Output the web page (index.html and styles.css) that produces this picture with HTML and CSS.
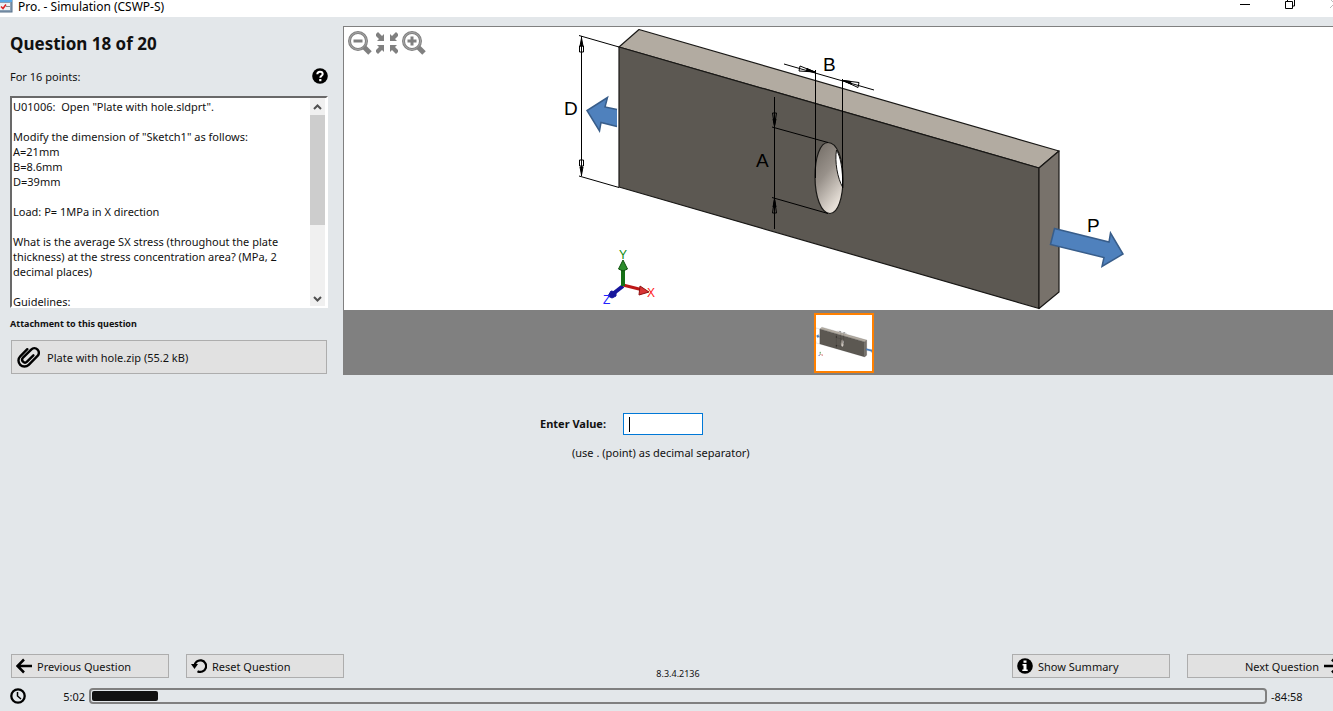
FILE: index.html
```html
<!DOCTYPE html>
<html lang="en">

<head>
    <meta charset="UTF-8">
    <meta name="viewport" content="width=device-width, initial-scale=1.0">
    <title>Pro. - Simulation (CSWP-S)</title>
    <link rel="stylesheet" href="styles.css">
</head>

<body>
    <div class="app">
        <header class="titlebar">
            <svg class="appicon" width="13" height="13" viewBox="0 0 13 13">
                <rect x="-4" y="0" width="16" height="12" fill="#8aa0b5" stroke="#56708a"/>
                <rect x="-4" y="0" width="16" height="2" fill="#5aa9e6"/>
                <rect x="-3" y="3" width="13" height="7" fill="#eef2f5"/>
                <path d="M1 6.5l2 2 3-4" fill="none" stroke="#d22" stroke-width="1.5"/>
                <path d="M6 6.5h4" stroke="#888"/>
            </svg>
            <span class="apptitle">Pro. - Simulation (CSWP-S)</span>
            <button class="winbtn" aria-label="Minimize"><svg width="11" height="17" viewBox="0 0 11 17"><path d="M0 4.5h10" stroke="#000"/></svg></button>
            <button class="winbtn" aria-label="Restore"><svg width="11" height="17" viewBox="0 0 11 17"><path d="M1.500 1.500h7v7h-7zM3.500 1v-2h7v7h-2" fill="none" stroke="#000"/></svg></button>
            <button class="winbtn" aria-label="Close"><svg width="11" height="17" viewBox="0 0 11 17"><path d="M2-1l9 9M11-1L2 8" stroke="#bbb"/></svg></button>
        </header>

        <main class="content">
            <section class="question">
                <h1>Question 18 of 20</h1>
                <div class="points">
                    <span>For 16 points:</span>
                    <button class="help" aria-label="Help">
                        <svg width="16" height="16" viewBox="0 0 16 16">
                            <circle cx="8" cy="8" r="7.8"/>
                            <path d="M5.300 6.200C5.300 2.700 10.700 2.900 10.700 6c0 1.700-2.400 1.700-2.400 3.700" fill="none" stroke="#fff" stroke-width="2"/>
                            <rect x="7.200" y="11" width="2.200" height="2.200" fill="#fff"/>
                        </svg>
                    </button>
                </div>
                <div class="textbox">
                    <textarea class="textarea" aria-label="Question text" readonly>U01006:  Open "Plate with hole.sldprt".

Modify the dimension of "Sketch1" as follows:
A=21mm
B=8.6mm
D=39mm

Load: P= 1MPa in X direction

What is the average SX stress (throughout the plate thickness) at the stress concentration area? (MPa, 2 decimal places)

Guidelines:</textarea>
                    <div class="scrollbar">
                        <svg width="15" height="17" viewBox="0 0 15 17"><path d="M4 11l3.500-3.500L11 11" fill="none" stroke="#505050" stroke-width="2"/></svg>
                        <div class="thumb"></div>
                        <svg width="15" height="17" viewBox="0 0 15 17"><path d="M4 8l3.500 3.500L11 8" fill="none" stroke="#505050" stroke-width="2"/></svg>
                    </div>
                </div>
                <h2>Attachment to this question</h2>
                <button class="btn attachment">
                    <svg width="24" height="24" viewBox="1 1 24 24" fill="none" stroke="#000" stroke-width="2.400" stroke-linecap="round">
                        <path transform="rotate(45 13 13)" d="M7 8v10a6 6 0 0 0 12 0V5.500a4.500 4.500 0 0 0-9 0V17a2.800 2.800 0 0 0 5.600 0V8"/>
                    </svg>
                    Plate with hole.zip (55.2 kB)
                </button>
            </section>

            <section class="viewer">
                <div class="stage">
                    <div class="tools">
                        <button aria-label="Zoom out">
                            <svg width="26" height="26" viewBox="0 0 26 26" fill="none" stroke="#808080">
                                <circle cx="11" cy="11" r="8.500" stroke-width="3"/>
                                <circle cx="11" cy="11" r="8.500" stroke="#a8a8a8"/>
                                <path d="M17 17l6 6" stroke-width="5"/>
                                <path d="M6.500 11h9" stroke-width="3"/>
                            </svg>
                        </button>
                        <button aria-label="Fit to window">
                            <svg width="26" height="26" viewBox="0 0 26 26" fill="#808080">
                                <path id="corner" d="M2 4l2-2 4 4 2-2v7H3l2-2-3-3z"/>
                                <use href="#corner" transform="matrix(-1 0 0 1 26 0)"/>
                                <use href="#corner" transform="matrix(1 0 0 -1 0 26)"/>
                                <use href="#corner" transform="rotate(180 13 13)"/>
                            </svg>
                        </button>
                        <button aria-label="Zoom in">
                            <svg width="26" height="26" viewBox="0 0 26 26" fill="none" stroke="#808080">
                                <circle cx="11" cy="11" r="8.500" stroke-width="3"/>
                                <circle cx="11" cy="11" r="8.500" stroke="#a8a8a8"/>
                                <path d="M17 17l6 6" stroke-width="5"/>
                                <path d="M6.500 11h9M11 6.500v9" stroke-width="3"/>
                            </svg>
                        </button>
                    </div>
                    <svg class="drawing" viewBox="344 27 1000 283">
                        <defs>
                            <linearGradient id="bore" x1="0" y1="0" x2=".5" y2="1">
                                <stop offset="0" stop-color="#6f6962"/>
                                <stop offset=".5" stop-color="#98918a"/>
                                <stop offset="1" stop-color="#e6dfd7"/>
                            </linearGradient>
                        </defs>
                        <g id="plate">
                            <!-- plate -->
                            <g stroke="#191816" stroke-width="1.200" stroke-linejoin="round">
                                <path d="M619 47l20-17.500L1059 151l-20 17z" fill="#b2aba1"/>
                                <path d="M619 47l420 121v140.500L619 187z" fill="#5c5852"/>
                                <path d="M1039 168l20-17v141l-20 16.500z" fill="#78726b"/>
                                <path d="M828 142.500c9 0 15 16 15 36 0 19-5 35-13 35-9 0-15-17-15-37 0-19 5-34 13-34z" fill="url(#bore)"/>
                            </g>
                            <path d="M836.500 150c4 7 6.300 18 6.300 37.500-5.300-9-8.300-26-6.300-37.500z" fill="#fff" stroke="#191816"/>
                            <!-- load arrows -->
                            <g fill="#4f81bd" stroke="#385d8a" stroke-width="1.500">
                                <path d="M617 109.500l-12-2.500 2.500-9.500L587 110.500l12.500 20.500 1.500-8.500 16 4"/>
                                <path d="M1054.500 228.500l54.500 13.500 1.500-9 12.500 21-21 12.500 2-9-53.500-13z"/>
                            </g>
                            <!-- dimensions -->
                            <g fill="none" stroke="#000">
                                <path d="M581.500 36v140"/>
                                <path d="M579 35.500l40 11.500M579 176l40 11.500"/>
                                <path d="M579.500 46v6h4v-6zM579.500 160v6h4v-6z"/>
                                <path d="M581.500 38l-1.500 8h3zM581.500 175l-1.500-8h3z" fill="#000"/>
                                <path d="M774.500 97v132M772 127l56 15.500M772 197.500l56 16"/>
                                <path d="M774.500 126l-2-13h4zM774.500 199l-2 14h4z"/>
                                <path d="M774.500 126l-1.500-7h3zM774.500 199l-1.500 8h3z" fill="#000"/>
                                <path d="M815.500 70v108M842.500 79v109M784 64l90 26"/>
                                <path d="M815 72l-15-6-1 5zM843 80.500l16 2-1 5z"/>
                                <path d="M815 72l-8-3.500-.5 2.500zM843 80.500l8 1-.5 2.500z" fill="#000"/>
                            </g>
                            <!-- triad -->
                            <path d="M623 286l-9 7" stroke="#16169c" stroke-width="4"/>
                            <path d="M608 296l3-5 5 1v4l-4 2z" fill="#16169c" stroke="#16169c"/>
                            <path d="M623 285l20 5" stroke="#bd1717" stroke-width="3"/>
                            <path d="M640 286l9 6-10 3z" fill="#d83434" stroke="#8e1010"/>
                            <path d="M623 286v-18" stroke="#167016" stroke-width="4"/>
                            <path d="M623 260l-4.500 9 4.500 2 4.500-2z" fill="#2d8e2d" stroke="#0d500d"/>
                        </g>
                        <g class="dims">
                            <text x="564" y="115">D</text>
                            <text x="823" y="71">B</text>
                            <text x="756" y="167">A</text>
                            <text x="1087" y="232">P</text>
                        </g>
                        <g class="axes">
                            <text x="619" y="259" fill="#0d8a0d">Y</text>
                            <text x="647" y="297" fill="#f22">X</text>
                            <text x="603" y="304" fill="#22f">Z</text>
                        </g>
                    </svg>
                </div>
                <div class="strip">
                    <button class="preview" aria-label="Image 1">
                        <svg width="56" height="56" viewBox="584 -84 524 524"><use href="#plate"/></svg>
                    </button>
                </div>
            </section>
        </main>

        <form class="answer" onsubmit="return false">
            <div class="answerrow">
                <label for="value">Enter Value:</label>
                <input type="text" id="value">
            </div>
            <p>(use . (point) as decimal separator)</p>
        </form>

        <footer>
            <nav class="buttons">
                <button class="btn">
                    <svg width="16" height="16" viewBox="0 0 16 16"><path d="M16 8H2M8 1.500L1.500 8 8 14.500" fill="none" stroke="#000" stroke-width="2.500"/></svg>
                    Previous Question
                </button>
                <button class="btn">
                    <svg width="16" height="16" viewBox="0 0 16 16"><path d="M3.500 8a5.800 5.800 0 1 1 3 5.200" fill="none" stroke="#000" stroke-width="2.200"/><path d="M0 6h7l-3.500 5z"/></svg>
                    Reset Question
                </button>
                <span class="version">8.3.4.2136</span>
                <button class="btn">
                    <svg width="16" height="16" viewBox="0 0 16 16"><circle cx="8" cy="8" r="7.8"/><path d="M6.500 2.500h3v2.200h-3zM5.500 6h4v5.500h1.200V13H5.300v-1.500h1.200v-4h-1z" fill="#fff"/></svg>
                    Show Summary
                </button>
                <button class="btn next">
                    Next Question
                    <svg width="16" height="16" viewBox="0 0 16 16"><path d="M0 8h14M8 1.500L14.500 8 8 14.500" fill="none" stroke="#000" stroke-width="2.500"/></svg>
                </button>
            </nav>
            <div class="timer">
                <svg width="16" height="16" viewBox="0 0 16 16" fill="none" stroke="#000"><circle cx="8" cy="8" r="6.700" stroke-width="2.300"/><path d="M7.500 4v4l3.500 3" stroke-width="1.500"/></svg>
                <label class="elapsed" for="time">5:02</label>
                <progress id="time" value="302" max="5400"></progress>
                <span class="remaining">-84:58</span>
            </div>
        </footer>
    </div>
</body>

</html>
```
FILE: styles.css
```css
* {
    box-sizing: border-box;
}

body {
    margin: 0;
    overflow: hidden;
    background-color: #e3e7ea;
    color: #111;
    font-family: "Noto Sans", "Open Sans", sans-serif;
    font-size: 11px;
    line-height: 15px;
}

button,
input,
textarea {
    font: inherit;
    color: inherit;
}

h1,
h2,
p {
    margin: 0;
}

svg {
    display: block;
    flex: none;
}

/* the window is slightly wider than the screen */
.app {
    width: calc(100% + 22px);
    min-height: 100vh;
    display: flex;
    flex-direction: column;
}

.titlebar {
    display: flex;
    height: 17px;
    background-color: #fff;
}

.appicon {
    margin-right: 5px;
}

.apptitle {
    flex: 1;
    font-size: 12px;
    line-height: 14px;
    color: #000;
}

.winbtn {
    width: 44px;
    padding: 0;
    border: none;
    background: none;
    display: flex;
    justify-content: center;
}

.content {
    display: flex;
    gap: 15px;
    padding: 9px 11px 0 10px;
}

.question {
    width: 318px;
    flex: none;
}

h1 {
    padding-top: 6px;
    font-size: 17px;
    line-height: 24px;
}

.points {
    display: flex;
    justify-content: space-between;
    align-items: center;
    height: 40px;
}

.help {
    padding: 0;
    border: none;
    background: none;
}

.textbox {
    display: flex;
    height: 212px;
    border: 2px solid #696969;
    border-color: #696969 #fff #fff #696969;
    background-color: #fff;
}

.textarea {
    flex: 1;
    min-width: 0;
    padding: 1px 0 0 1px;
    border: none;
    outline: none;
    resize: none;
    overflow: hidden;
    background: none;
}

.scrollbar {
    width: 15px;
    margin-right: 1px;
    display: flex;
    flex-direction: column;
    background-color: #f0f0f0;
}

.thumb {
    height: 110px;
    margin-bottom: auto;
    background-color: #cdcdcd;
}

h2 {
    padding: 8px 0 9px;
    font-size: 9px;
    line-height: 15px;
}

.btn {
    width: 158px;
    height: 24px;
    padding: 0 4px;
    border: 1px solid #adadad;
    background-color: #e1e1e1;
    display: flex;
    align-items: center;
    gap: 5px;
    white-space: nowrap;
}

.attachment {
    width: calc(100% - 2px);
    height: 34px;
    margin: 0 1px;
    gap: 7px;
}

.viewer {
    flex: 1;
    min-width: 0;
}

.stage {
    position: relative;
    border: 1px solid #808080;
    border-width: 1px 0 0 1px;
    background-color: #fff;
}

.tools {
    position: absolute;
    top: 3px;
    left: 3px;
    display: flex;
    gap: 1px;
}

.tools button {
    padding: 0;
    border: none;
    background: none;
}

.drawing {
    width: 100%;
    height: 283px;
}

.dims {
    font: 19px "Liberation Sans", sans-serif;
}

.axes {
    font: 12px "Liberation Sans", sans-serif;
}

.strip {
    display: flex;
    justify-content: center;
    padding: 3px 0 2px;
    background-color: #808080;
}

.preview {
    padding: 0;
    border: 2px solid #ff8000;
    background-color: #fff;
}

.answer {
    width: 275px;
    margin: 38px auto 0;
}

.answerrow {
    display: flex;
    align-items: center;
    gap: 17px;
}

.answerrow label {
    padding-bottom: 2px;
    font-weight: bold;
    white-space: nowrap;
}

.answerrow input {
    width: 80px;
    height: 22px;
    padding: 0 5px;
    border: 1px solid #0078d7;
    outline: none;
    caret-color: transparent;
    background: linear-gradient(#000, #000) 5px center / 1px 15px no-repeat #fff;
}

.answer p {
    padding: 10px 0 0 32px;
    white-space: nowrap;
}

footer {
    margin-top: auto;
    padding: 0 10px 7px;
}

.buttons {
    display: flex;
    gap: 17px;
    padding-left: 1px;
}

.version {
    flex: 1;
    padding-top: 12px;
    text-align: center;
    font-size: 9px;
}

.next {
    justify-content: flex-end;
}

.timer {
    display: flex;
    align-items: center;
    padding-top: 7px;
}

.elapsed {
    width: 63px;
    padding-right: 4px;
    text-align: right;
}

.timer progress {
    flex: 1;
    height: 16px;
    padding: 1px;
    border: 2px solid #808080;
    border-radius: 4px;
    appearance: none;
    background: none;
}

.timer progress::-webkit-progress-bar {
    background: none;
}

.timer progress::-webkit-progress-value {
    border-radius: 2px;
    background-color: #111;
}

.remaining {
    width: 78px;
    padding-left: 4px;
}
```
